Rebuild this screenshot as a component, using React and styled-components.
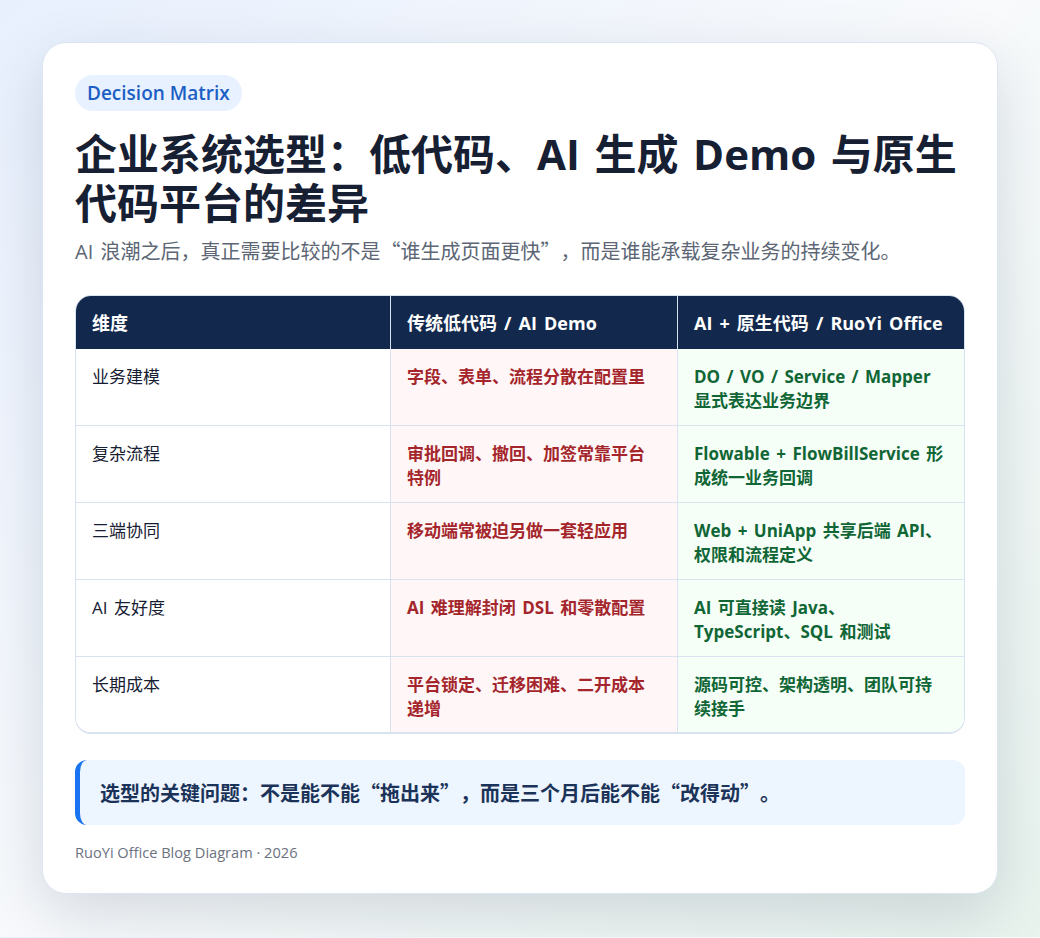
import React from "react";
import styled, { createGlobalStyle } from "styled-components";

const rows = [
  {
    name: "业务建模",
    old: "字段、表单、流程分散在配置里",
    next: "DO / VO / Service / Mapper 显式表达业务边界",
  },
  {
    name: "复杂流程",
    old: "审批回调、撤回、加签常靠平台特例",
    next: "Flowable + FlowBillService 形成统一业务回调",
  },
  {
    name: "三端协同",
    old: "移动端常被迫另做一套轻应用",
    next: "Web + UniApp 共享后端 API、权限和流程定义",
  },
  {
    name: "AI 友好度",
    old: "AI 难理解封闭 DSL 和零散配置",
    next: "AI 可直接读 Java、\nTypeScript、SQL 和测试",
  },
  {
    name: "长期成本",
    old: "平台锁定、迁移困难、二开成本递增",
    next: "源码可控、架构透明、团队可持续接手",
  },
];

const Global = createGlobalStyle`
  * { box-sizing: border-box; }
  html, body { margin: 0; padding: 0; }
  body {
    font-family: "Open Sans", "Noto Sans CJK SC", sans-serif;
    color: #172033;
    text-spacing-trim: space-all;
    background: linear-gradient(135deg, #e8f0fe 0%, #f8fafc 50%, #e8f3ee 100%);
  }
`;

const Page = styled.div`
  width: 1040px;
  height: 937px;
  padding: 42px;
`;

const Card = styled.main`
  height: 852px;
  padding: 32px;
  background: #fff;
  border: 1px solid #dce5f2;
  border-radius: 24px;
  box-shadow: 0 20px 60px rgba(15, 35, 60, 0.15);
`;

const Chip = styled.div`
  display: inline-flex;
  align-items: center;
  height: 36px;
  padding: 0 12px;
  border-radius: 18px;
  background: #e8f1ff;
  color: #1c5fc4;
  font-size: 19px;
  font-weight: 600;
`;

const Title = styled.h1`
  margin: 18px 0 0;
  font-size: 42px;
  line-height: 49px;
  font-weight: 700;
  word-spacing: 3.7px;
  color: #172033;
`;

const Subtitle = styled.p`
  margin: 10px 0 0;
  height: 32px;
  font-size: 20px;
  line-height: 28px;
  word-spacing: 2px;
  color: #5c6675;
`;

const Quote = styled.span`
  font-family: "Noto Sans CJK SC", sans-serif;
`;

const Table = styled.table`
  width: 890px;
  margin-top: 26px;
  border-collapse: separate;
  border-spacing: 0;
  table-layout: fixed;
  border: 1px solid #d9e2ef;
  border-bottom-width: 2px;
  border-radius: 16px;
  overflow: hidden;
  font-size: 17px;
  line-height: 24px;
  word-spacing: 2px;
`;

const Head = styled.th`
  height: 53px;
  padding: 0 16px;
  background: #12294d;
  color: #fff;
  font-size: 18px;
  font-weight: 700;
  text-align: left;
  word-spacing: 2.4px;
  border-left: ${(p) => (p.$first ? "0" : "1px solid #d9e2ef")};
`;

const toneBg = { old: "#fff7f7", next: "#f5fff8" };
const toneText = { old: "#a4262c", next: "#116636" };

const Cell = styled.td`
  padding: 16px 16px ${(p) => (p.$last ? "11px" : "12px")};
  vertical-align: top;
  white-space: pre-line;
  border-bottom: ${(p) => (p.$last ? "0" : "1px solid #d9e2ef")};
  border-left: ${(p) => (p.$tone ? "1px solid #d9e2ef" : "0")};
  background: ${(p) => (p.$tone ? toneBg[p.$tone] : "#fff")};
  color: ${(p) => (p.$tone ? toneText[p.$tone] : "#172033")};
  font-weight: ${(p) => (p.$tone ? 700 : 400)};
`;

const Callout = styled.div`
  display: flex;
  align-items: center;
  height: 65px;
  margin-top: 26px;
  padding: 0 20px;
  background: #edf5ff;
  border-left: 5px solid #1a73f0;
  border-radius: 12px;
  color: #1b3358;
  font-size: 20px;
  font-weight: 700;
`;

const Footer = styled.div`
  margin-top: 17px;
  font-size: 14.6px;
  line-height: 20px;
  color: #6b7280;
`;

export default function App() {
  return (
    <>
      <Global />
      <Page>
        <Card>
          <Chip>Decision Matrix</Chip>
          <Title>企业系统选型：低代码、AI 生成 Demo 与原生代码平台的差异</Title>
          <Subtitle>
            AI 浪潮之后，真正需要比较的不是<Quote>“</Quote>谁生成页面更快<Quote>”</Quote>，而是谁能承载复杂业务的持续变化。
          </Subtitle>
          <Table>
            <colgroup>
              <col style={{ width: 314 }} />
              <col style={{ width: 287 }} />
              <col />
            </colgroup>
            <thead>
              <tr>
                <Head $first>维度</Head>
                <Head>传统低代码 / AI Demo</Head>
                <Head>AI + 原生代码 / RuoYi Office</Head>
              </tr>
            </thead>
            <tbody>
              {rows.map((row, i) => {
                const last = i === rows.length - 1;
                return (
                  <tr key={row.name}>
                    <Cell $last={last}>{row.name}</Cell>
                    <Cell $last={last} $tone="old">{row.old}</Cell>
                    <Cell $last={last} $tone="next">{row.next}</Cell>
                  </tr>
                );
              })}
            </tbody>
          </Table>
          <Callout>
            <span>选型的关键问题：不是能不能<Quote>“</Quote>拖出来<Quote>”</Quote>，而是三个月后能不能<Quote>“</Quote>改得动<Quote>”</Quote>。</span>
          </Callout>
          <Footer>RuoYi Office Blog Diagram · 2026</Footer>
        </Card>
      </Page>
    </>
  );
}
